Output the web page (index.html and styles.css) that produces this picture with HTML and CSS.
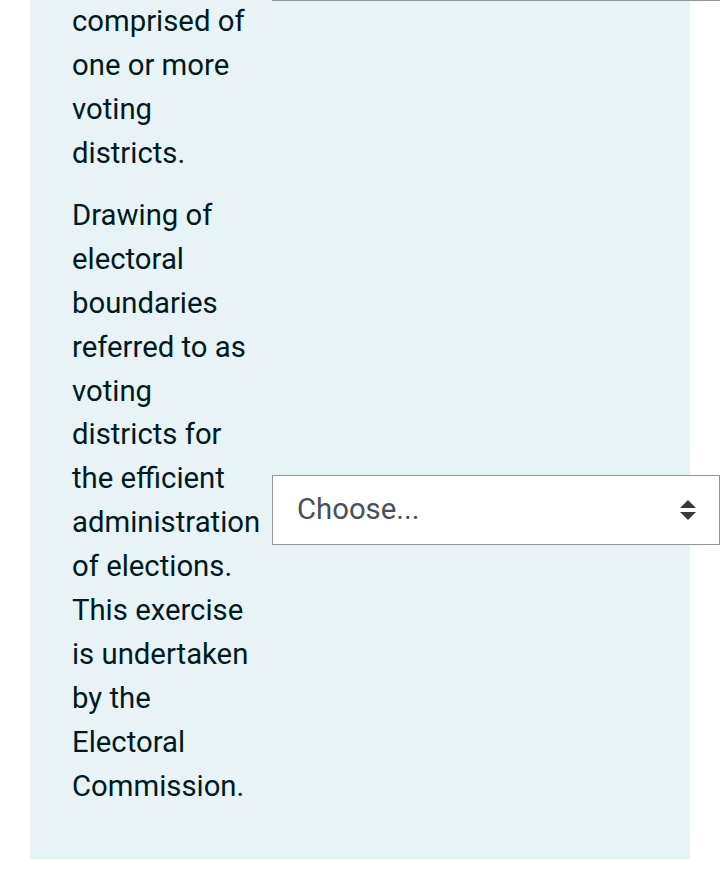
FILE: index.html
```html
<!DOCTYPE html>
<html lang="en">
<head>
<meta charset="utf-8">
<title>Matching question</title>
<link rel="stylesheet" href="styles.css">
</head>
<body>
<div class="formulation">
  <div class="match-row first">
    <div class="text-cell">
      <p>comprised of one or more voting districts.</p>
    </div>
    <div class="control-cell top">
      <div class="select-edge"></div>
    </div>
  </div>
  <div class="match-row">
    <div class="text-cell">
      <p>Drawing of electoral boundaries referred to as voting districts for the efficient administration of elections. This exercise is undertaken by the Electoral Commission.</p>
    </div>
    <div class="control-cell">
      <div class="select">
        <span class="select-label">Choose...</span>
        <svg class="select-arrow" viewBox="0 0 4 5" width="16" height="20" aria-hidden="true"><path d="M2 0L0 2h4zm0 5L0 3h4z" fill="#343a40"/></svg>
      </div>
    </div>
  </div>
</div>
</body>
</html>
```

FILE: styles.css
```css
html, body {
  margin: 0;
  padding: 0;
  background: #ffffff;
}

body {
  font-family: Roboto, "Liberation Sans", Arial, sans-serif;
  font-size: 29.3px;
  line-height: 1.5;
  color: #001a1e;
  overflow: hidden;
}

.formulation {
  margin-left: 30px;
  width: 660px;
  box-sizing: border-box;
  background: #e7f3f5;
  padding: 0 0 32px 42px;
}

.match-row {
  display: grid;
  grid-template-columns: 200px 448px;
  align-items: center;
}

.match-row.first {
  align-items: start;
}

.text-cell {
  width: 190px;
  padding-right: 10px;
  padding-bottom: 18px;
}

.text-cell p {
  margin: 0;
}

.control-cell {
  width: 448px;
}

.select-edge {
  height: 0;
  border-bottom: 1px solid #8f959e;
}

.select {
  box-sizing: border-box;
  height: 70px;
  width: 448px;
  background: #ffffff;
  border: 1px solid #8f959e;
  display: flex;
  align-items: center;
  justify-content: space-between;
  padding: 0 23px 0 24px;
  color: #495057;
}

.select-label {
  line-height: 1.5;
}

.select-arrow {
  display: block;
  width: 16px;
  height: 20px;
}
```
